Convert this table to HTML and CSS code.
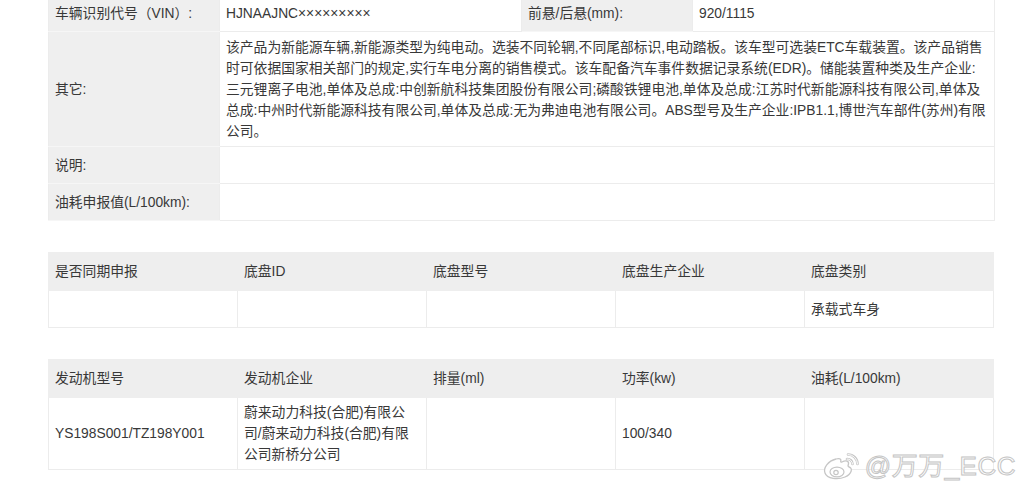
FILE: index.html
```html
<!DOCTYPE html>
<html lang="zh-CN">
<head>
  <meta charset="UTF-8" />
  <meta name="viewport" content="width=device-width, initial-scale=1.0" />
  <title>车辆参数</title>
  <link rel="stylesheet" href="styles.css">
</head>
<body>
  <div class="page">
    <table class="info">
      <colgroup>
        <col class="c-label"><col class="c-value"><col class="c-label"><col class="c-value">
      </colgroup>
      <tr class="row-1">
        <td class="label">车辆识别代号（VIN）:</td>
        <td>HJNAAJNC×××××××××</td>
        <td class="label">前悬/后悬(mm):</td>
        <td>920/1115</td>
      </tr>
      <tr class="row-long">
        <td class="label">其它:</td>
        <td colspan="3" class="long">该产品为新能源车辆,新能源类型为纯电动。选装不同轮辋,不同尾部标识,电动踏板。该车型可选装ETC车载装置。该产品销售时可依据国家相关部门的规定,实行车电分离的销售模式。该车配备汽车事件数据记录系统(EDR)。储能装置种类及生产企业:三元锂离子电池,单体及总成:中创新航科技集团股份有限公司;磷酸铁锂电池,单体及总成:江苏时代新能源科技有限公司,单体及总成:中州时代新能源科技有限公司,单体及总成:无为弗迪电池有限公司。ABS型号及生产企业:IPB1.1,博世汽车部件(苏州)有限公司。</td>
      </tr>
      <tr>
        <td class="label">说明:</td>
        <td colspan="3"></td>
      </tr>
      <tr>
        <td class="label">油耗申报值(L/100km):</td>
        <td colspan="3"></td>
      </tr>
    </table>

    <table class="grid">
      <thead>
        <tr>
          <th>是否同期申报</th>
          <th>底盘ID</th>
          <th>底盘型号</th>
          <th>底盘生产企业</th>
          <th>底盘类别</th>
        </tr>
      </thead>
      <tbody>
        <tr>
          <td></td>
          <td></td>
          <td></td>
          <td></td>
          <td>承载式车身</td>
        </tr>
      </tbody>
    </table>

    <table class="grid">
      <thead>
        <tr>
          <th>发动机型号</th>
          <th>发动机企业</th>
          <th>排量(ml)</th>
          <th>功率(kw)</th>
          <th>油耗(L/100km)</th>
        </tr>
      </thead>
      <tbody>
        <tr class="tall">
          <td>YS198S001/TZ198Y001</td>
          <td>蔚来动力科技(合肥)有限公司/蔚来动力科技(合肥)有限公司新桥分公司</td>
          <td></td>
          <td>100/340</td>
          <td></td>
        </tr>
      </tbody>
    </table>
  </div>

  <div class="watermark">
    <svg width="40" height="30" viewBox="0 0 40 30">
      <path d="M14 8 C6 10 1 17 3 22 C5 28 16 29 23 26 C30 23 31 17 27 16 C26 15.5 26 14 26.5 13 C27 10 24 9 20 11 C19 11.5 18.5 11 18.8 10 C19.5 8 17.5 7 14 8 Z" fill="#fff" stroke="#c6c6c6" stroke-width="1.3"/>
      <ellipse cx="15" cy="21" rx="7" ry="4.8" fill="#fff" stroke="#c6c6c6" stroke-width="1.2"/>
      <circle cx="14" cy="21.5" r="2.2" fill="#fff" stroke="#c6c6c6" stroke-width="1.2"/>
      <path d="M26 3.5 A9.5 9.5 0 0 1 35.5 13" fill="none" stroke="#c6c6c6" stroke-width="2.6" stroke-linecap="round"/>
      <path d="M26 3.5 A9.5 9.5 0 0 1 35.5 13" fill="none" stroke="#fff" stroke-width="1" stroke-linecap="round"/>
      <path d="M25 8 A5 5 0 0 1 30.5 13" fill="none" stroke="#c6c6c6" stroke-width="2.6" stroke-linecap="round"/>
      <path d="M25 8 A5 5 0 0 1 30.5 13" fill="none" stroke="#fff" stroke-width="1" stroke-linecap="round"/>
    </svg>
    <span>@万万_ECC</span>
  </div>
</body>
</html>
```

FILE: styles.css
```css
* { box-sizing: border-box; }

body {
  margin: 0;
  background: #fff;
  color: #383838;
  font-family: "Liberation Sans", "Noto Sans CJK SC", sans-serif;
  font-size: 13.8px;
  line-height: 21px;
  overflow: hidden;
}

.page {
  margin-top: -6px;
  padding-left: 48px;
  width: 994px;
  display: flex;
  flex-direction: column;
  gap: 31px;
}

table {
  width: 946px;
  border-collapse: collapse;
  table-layout: fixed;
}

td, th {
  border: 1px solid #ececec;
  padding: 4px 9px 4px 6px;
  text-align: left;
  font-weight: normal;
  vertical-align: middle;
}

/* top info table */
.info .c-label { width: 171px; }
.info .c-value { width: 302px; }

.info tr { height: 37px; }
.info .row-long { height: 113px; }

.info .label {
  background: #efefef;
  border-color: #f6f6f6 #ececec;
  white-space: nowrap;
}

.info .long {
  padding-right: 6px;
  vertical-align: top;
  padding-top: 5px;
}

/* chassis / engine tables */
.grid th {
  background: #eeeeee;
  border-color: #eeeeee;
  height: 38px;
}

.grid td {
  height: 37px;
}

.grid .tall td {
  height: 72px;
}

.watermark {
  position: absolute;
  right: 8px;
  bottom: 10px;
  display: flex;
  align-items: center;
  gap: 3px;
}

.watermark span {
  font-size: 26px;
  line-height: 30px;
  color: #fff;
  -webkit-text-stroke: 1px #c4c4c4;
  letter-spacing: 0.5px;
}
```
